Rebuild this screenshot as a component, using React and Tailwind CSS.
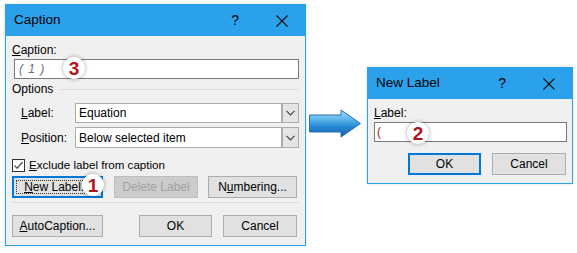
import React from "react";

const Badge = ({ n, className }) => (
  <div
    className={`absolute w-[22px] h-[22px] rounded-full bg-white flex items-center justify-center shadow-[0_0_4px_rgba(0,0,0,0.35)] text-[19px] font-bold not-italic tracking-normal leading-none text-[#b2141c] font-['Liberation_Sans',sans-serif] ${className}`}
  >
    {n}
  </div>
);

const Btn = ({ children, className = "", focused, disabled }) => (
  <div
    className={`h-[22px] flex items-center justify-center ${
      disabled
        ? "bg-[#cccccc] border border-[#bfbfbf] text-[#a0a0a0]"
        : focused
        ? "bg-[#e1e1e1] border-2 border-[#0078d7] text-black"
        : "bg-[#e1e1e1] border border-[#adadad] text-black"
    } ${className}`}
  >
    {children}
  </div>
);

const TitleBar = ({ title }) => (
  <div className="h-[31px] bg-[#2ba1ec] flex items-center pl-[8px] pr-[17px] text-[13.5px] text-black">
    <span className="flex-1">{title}</span>
    <span className="text-[14px] mr-[37px]">?</span>
    <svg width="12" height="12" viewBox="0 0 12 12">
      <path d="M0.5 0.5 L11.5 11.5 M11.5 0.5 L0.5 11.5" stroke="#111" strokeWidth="1.1" />
    </svg>
  </div>
);

const Chevron = () => (
  <svg width="9" height="6" viewBox="0 0 9 6">
    <path d="M0.5 0.8 L4.5 4.8 L8.5 0.8" fill="none" stroke="#444" strokeWidth="1.2" />
  </svg>
);

const Select = ({ value, className = "" }) => (
  <div className={`flex-1 flex bg-white border border-[#acacac] ${className}`}>
    <span className="flex-1 pl-[3px] flex items-center">{value}</span>
    <div className="w-[17px] bg-[#e5e5e5] border-l-2 border-[#acacac] flex items-center justify-center">
      <Chevron />
    </div>
  </div>
);

export default function App() {
  return (
    <div className="w-[577px] h-[253px] bg-white flex items-start pl-[5px] pt-[4px] font-['Segoe_UI','Liberation_Sans',sans-serif] text-[12px] text-black">
      {/* Caption dialog */}
      <div className="w-[301px] h-[242px] border border-[#2ba1ec] bg-[#f0f0f0] flex flex-col shadow-[0_0_3px_rgba(0,0,0,0.15)]">
        <TitleBar title="Caption" />
        <div className="flex flex-col px-[6px]">
          <div className="mt-[6px] h-[16px] leading-[16px]">
            <u>C</u>aption:
          </div>
          <div className="relative mt-[1px] ml-[2px] h-[20px] bg-white border border-[#7a7a7a] flex items-center pl-[4px] text-[#6a6f78]">
            <span className="italic tracking-[1px]">( 1 )</span>
            <Badge n="3" className="left-[48px] top-[-3px]" />
          </div>
          <div className="mt-[2px] h-[16px] flex items-center">
            <span>Options</span>
            <div className="flex-1 h-px bg-[#dcdcdc] ml-[6px]" />
          </div>
          <div className="mt-[6px] h-[20px] flex">
            <span className="w-[63px] pl-[9px] flex items-center">
              <u>L</u>abel:
            </span>
            <Select value="Equation" />
          </div>
          <div className="mt-[4px] h-[21px] flex">
            <span className="w-[63px] pl-[9px] flex items-center">
              <u>P</u>osition:
            </span>
            <Select value="Below selected item" />
          </div>
          <div className="mt-[10px] h-[14px] flex items-center">
            <div className="w-[13px] h-[13px] border border-[#333] bg-white flex items-center justify-center">
              <svg width="11" height="11" viewBox="0 0 11 11">
                <path d="M1.5 5.5 L4.2 8.2 L9.5 2" fill="none" stroke="#555" strokeWidth="1.3" />
              </svg>
            </div>
            <span className="ml-[4px] text-[11.6px]">
              <u>E</u>xclude label from caption
            </span>
          </div>
          <div className="mt-[4px] flex">
            <Btn focused className="relative w-[91px]">
              <div className="absolute inset-[2px] border border-dotted border-[#333]" />
              <span>
                <u>N</u>ew Label...
              </span>
              <Badge n="1" className="left-[68px] top-[-4px]" />
            </Btn>
            <Btn disabled className="w-[84px] ml-[11px]">
              Delete Label
            </Btn>
            <Btn className="w-[89px] ml-[10px]">
              N<u>u</u>mbering...
            </Btn>
          </div>
          <div className="mt-[4px] h-px bg-[#dcdcdc]" />
          <div className="mt-[12px] flex">
            <Btn className="w-[91px]">
              <u>A</u>utoCaption...
            </Btn>
            <Btn className="w-[73px] ml-[36px]">OK</Btn>
            <Btn className="w-[74px] ml-[11px]">Cancel</Btn>
          </div>
        </div>
      </div>

      {/* Arrow */}
      <svg className="ml-[2px] mt-[105px]" width="54" height="29" viewBox="0 0 54 29">
        <defs>
          <linearGradient id="ag" x1="0" y1="0" x2="0" y2="1">
            <stop offset="0" stopColor="#a9dcf7" />
            <stop offset="0.35" stopColor="#5bb6ea" />
            <stop offset="0.6" stopColor="#2a8ad6" />
            <stop offset="1" stopColor="#1560b0" />
          </linearGradient>
        </defs>
        <path
          d="M1.5 6 L33 6 L33 1 L52.5 14.5 L33 28 L33 23 L1.5 23 Z"
          fill="url(#ag)"
          stroke="#2a6fb5"
          strokeWidth="1"
          strokeLinejoin="round"
        />
      </svg>

      {/* New Label dialog */}
      <div className="ml-[5px] mt-[63px] w-[206px] h-[117px] border border-[#2ba1ec] bg-[#f0f0f0] flex flex-col shadow-[0_0_3px_rgba(0,0,0,0.15)]">
        <TitleBar title="New Label" />
        <div className="flex flex-col pl-[6px] pr-[5px]">
          <div className="mt-[6px] h-[16px] leading-[16px]">
            <u>L</u>abel:
          </div>
          <div className="relative mt-[1px] h-[20px] bg-white border border-[#7a7a7a] flex items-center pl-[2px] text-[#b2141c]">
            (
            <Badge n="2" className="left-[32px] top-[-1px]" />
          </div>
          <div className="mt-[11px] flex justify-end pr-[1px]">
            <Btn focused className="w-[73px] h-[21px]">
              OK
            </Btn>
            <Btn className="w-[74px] h-[21px] ml-[11px]">Cancel</Btn>
          </div>
        </div>
      </div>
    </div>
  );
}
